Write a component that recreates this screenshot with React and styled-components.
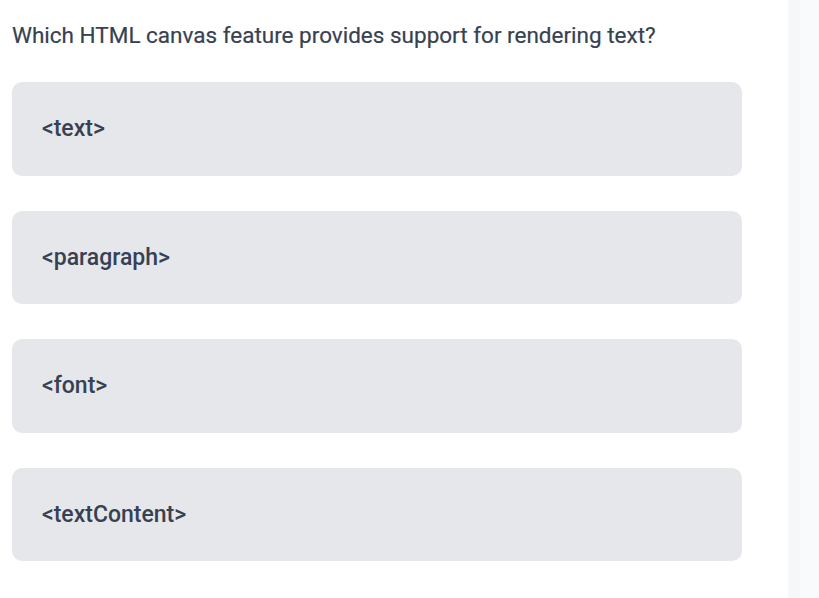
import React from 'react';
import styled, { createGlobalStyle } from 'styled-components';

const GlobalStyle = createGlobalStyle`
  html, body {
    margin: 0;
    padding: 0;
    background: #ffffff;
    font-family: Roboto, "Liberation Sans", sans-serif;
  }
`;

const options = ['<text>', '<paragraph>', '<font>', '<textContent>'];

export default function App() {
  return (
    <>
      <GlobalStyle />
      <Page>
        <Main>
          <Question>Which HTML canvas feature provides support for rendering text?</Question>
          <OptionList>
            {options.map((opt) => (
              <Option key={opt}>{opt}</Option>
            ))}
          </OptionList>
        </Main>
        <Divider />
        <Sidebar />
      </Page>
    </>
  );
}

const Page = styled.div`
  display: flex;
  width: 819px;
  height: 598px;
  overflow: hidden;
`;

const Main = styled.section`
  width: 788px;
  flex-shrink: 0;
  padding: 20px 46px 0 12px;
  box-sizing: border-box;
`;

const Question = styled.h2`
  margin: 0;
  font-size: 22.5px;
  font-weight: 400;
  line-height: 30px;
  color: #374151;
  -webkit-text-stroke: 0.2px #374151;
`;

const OptionList = styled.div`
  display: flex;
  flex-direction: column;
  gap: 35px;
  margin-top: 32px;
`;

const Option = styled.div`
  height: 93.5px;
  display: flex;
  align-items: center;
  padding: 0 30px;
  border-radius: 10px;
  background: #e5e7eb;
  color: #374151;
  font-size: 23px;
  font-weight: 500;
  box-sizing: border-box;
`;

const Divider = styled.div`
  width: 12px;
  flex-shrink: 0;
  background: #f6f7f8;
`;

const Sidebar = styled.aside`
  flex: 1;
  background: #f9fafb;
`;
